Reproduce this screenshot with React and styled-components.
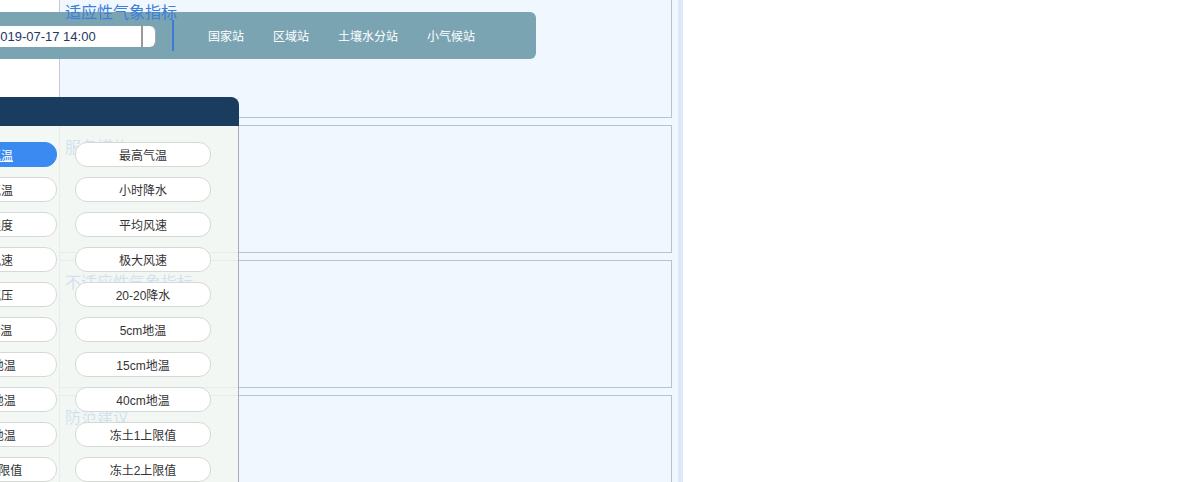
import React from "react"
import styled, { createGlobalStyle } from "styled-components"

const GlobalStyle = createGlobalStyle`
  html, body {
    margin: 0;
    padding: 0;
    overflow: hidden;
    background: #fff;
    font-family: "Liberation Sans", "Noto Sans CJK SC", sans-serif;
  }
`

const sections = ["适应性气象指标", "服务措施", "不适应性气象指标", "防范建议"]
const stations = ["国家站", "区域站", "土壤水分站", "小气候站"]
const elements = [
  "平均气温", "最高气温",
  "最低气温", "小时降水",
  "相对湿度", "平均风速",
  "最大风速", "极大风速",
  "本站气压", "20-20降水",
  "0cm地温", "5cm地温",
  "10cm地温", "15cm地温",
  "20cm地温", "40cm地温",
  "80cm地温", "冻土1上限值",
  "冻土1下限值", "冻土2上限值",
]

export default function App() {
  return (
    <>
      <GlobalStyle />
      <Page>
        <Sidebar />
        <Main>
          {sections.map((s) => (
            <Box key={s}>
              <BoxTitle>{s}</BoxTitle>
            </Box>
          ))}
        </Main>
        <Strip />
        <RightArea />

        <Toolbar>
          <DateField>
            <DateText>2019-07-17 14:00</DateText>
            <DateAddon />
          </DateField>
          <Divider />
          <StationList>
            {stations.map((s) => (
              <StationLink key={s}>{s}</StationLink>
            ))}
          </StationList>
        </Toolbar>

        <Panel>
          <PanelHeader />
          <PanelBody>
            {elements.map((e, i) => (
              <ElementButton key={e} active={i === 0}>
                {e}
              </ElementButton>
            ))}
          </PanelBody>
        </Panel>
      </Page>
    </>
  )
}

const Page = styled.div`
  position: relative;
  display: flex;
  width: 1202px;
  height: 482px;
  overflow: hidden;
  background: #fff;
`

const Sidebar = styled.div`
  width: 59px;
  flex-shrink: 0;
  background: #fff;
  border-right: 1px solid #c2c9d0;
`

const Main = styled.div`
  width: 612px;
  flex-shrink: 0;
  margin-top: -10px;
  padding-right: 6px;
  display: flex;
  flex-direction: column;
  gap: 7px;
  background: #f0f7ff;
`

const Box = styled.div`
  height: 128px;
  flex-shrink: 0;
  box-sizing: border-box;
  border: 1px solid #b5c3d1;
  border-left: none;
  background: #f0f7ff;
`

/* titles sit above the station toolbar but under the element panel */
const BoxTitle = styled.div`
  position: relative;
  z-index: 2;
  padding: 10px 5px 0;
  font-size: 16px;
  line-height: 20px;
  color: #3d7fd9;
  font-family: "Noto Sans CJK SC", sans-serif;
`

const Strip = styled.div`
  width: 5px;
  flex-shrink: 0;
  background: #dde9fb;
`

const RightArea = styled.div`
  flex: 1;
  background: #fff;
`

const Toolbar = styled.div`
  position: absolute;
  z-index: 1;
  left: -40px;
  top: 12px;
  width: 576px;
  height: 47px;
  display: flex;
  align-items: center;
  background: #7ba4b3;
  border-radius: 0 6px 6px 0;
`

const DateField = styled.div`
  display: flex;
  width: 196px;
  height: 21px;
  margin-top: 1px;
  background: #fff;
  border-radius: 0 6px 6px 0;
  border-right: 1px solid #a8a8a8;
  box-sizing: border-box;
`

const DateText = styled.div`
  flex: 1;
  padding-left: 33px;
  border-right: 2px solid #999;
  font-size: 13px;
  line-height: 21px;
  color: #263766;
  white-space: nowrap;
`

const DateAddon = styled.div`
  width: 12px;
`

const Divider = styled.div`
  width: 2px;
  height: 31px;
  margin-left: 16px;
  background: #3a7bd5;
`

const StationList = styled.div`
  display: flex;
  gap: 29px;
  margin-left: 34px;
`

const StationLink = styled.span`
  font-family: "Noto Sans CJK SC", sans-serif;
  font-size: 12px;
  color: #fff;
  cursor: pointer;
`

const Panel = styled.div`
  position: absolute;
  z-index: 3;
  left: -107px;
  top: 97px;
  bottom: 0;
  width: 346px;
  display: flex;
  flex-direction: column;
`

const PanelHeader = styled.div`
  height: 29px;
  background: #1a3c5f;
  border-radius: 0 8px 0 0;
`

const PanelBody = styled.div`
  flex: 1;
  box-sizing: border-box;
  display: grid;
  grid-template-columns: 136px 136px;
  grid-auto-rows: 25px;
  column-gap: 18px;
  row-gap: 10px;
  align-content: start;
  padding: 16px 0 0 28px;
  background: rgba(241, 246, 241, 0.82);
  border-right: 1px solid #a9adb0;
`

const ElementButton = styled.div`
  box-sizing: border-box;
  height: 25px;
  display: flex;
  align-items: center;
  justify-content: center;
  border-radius: 12px;
  border: 1px solid ${(p) => (p.active ? "#3a8af2" : "#d5d9d5")};
  background: ${(p) => (p.active ? "#3a8af2" : "#fff")};
  color: ${(p) => (p.active ? "#fff" : "#333")};
  text-decoration: ${(p) => (p.active ? "underline" : "none")};
  font-size: 12px;
  white-space: nowrap;
  cursor: pointer;
`
